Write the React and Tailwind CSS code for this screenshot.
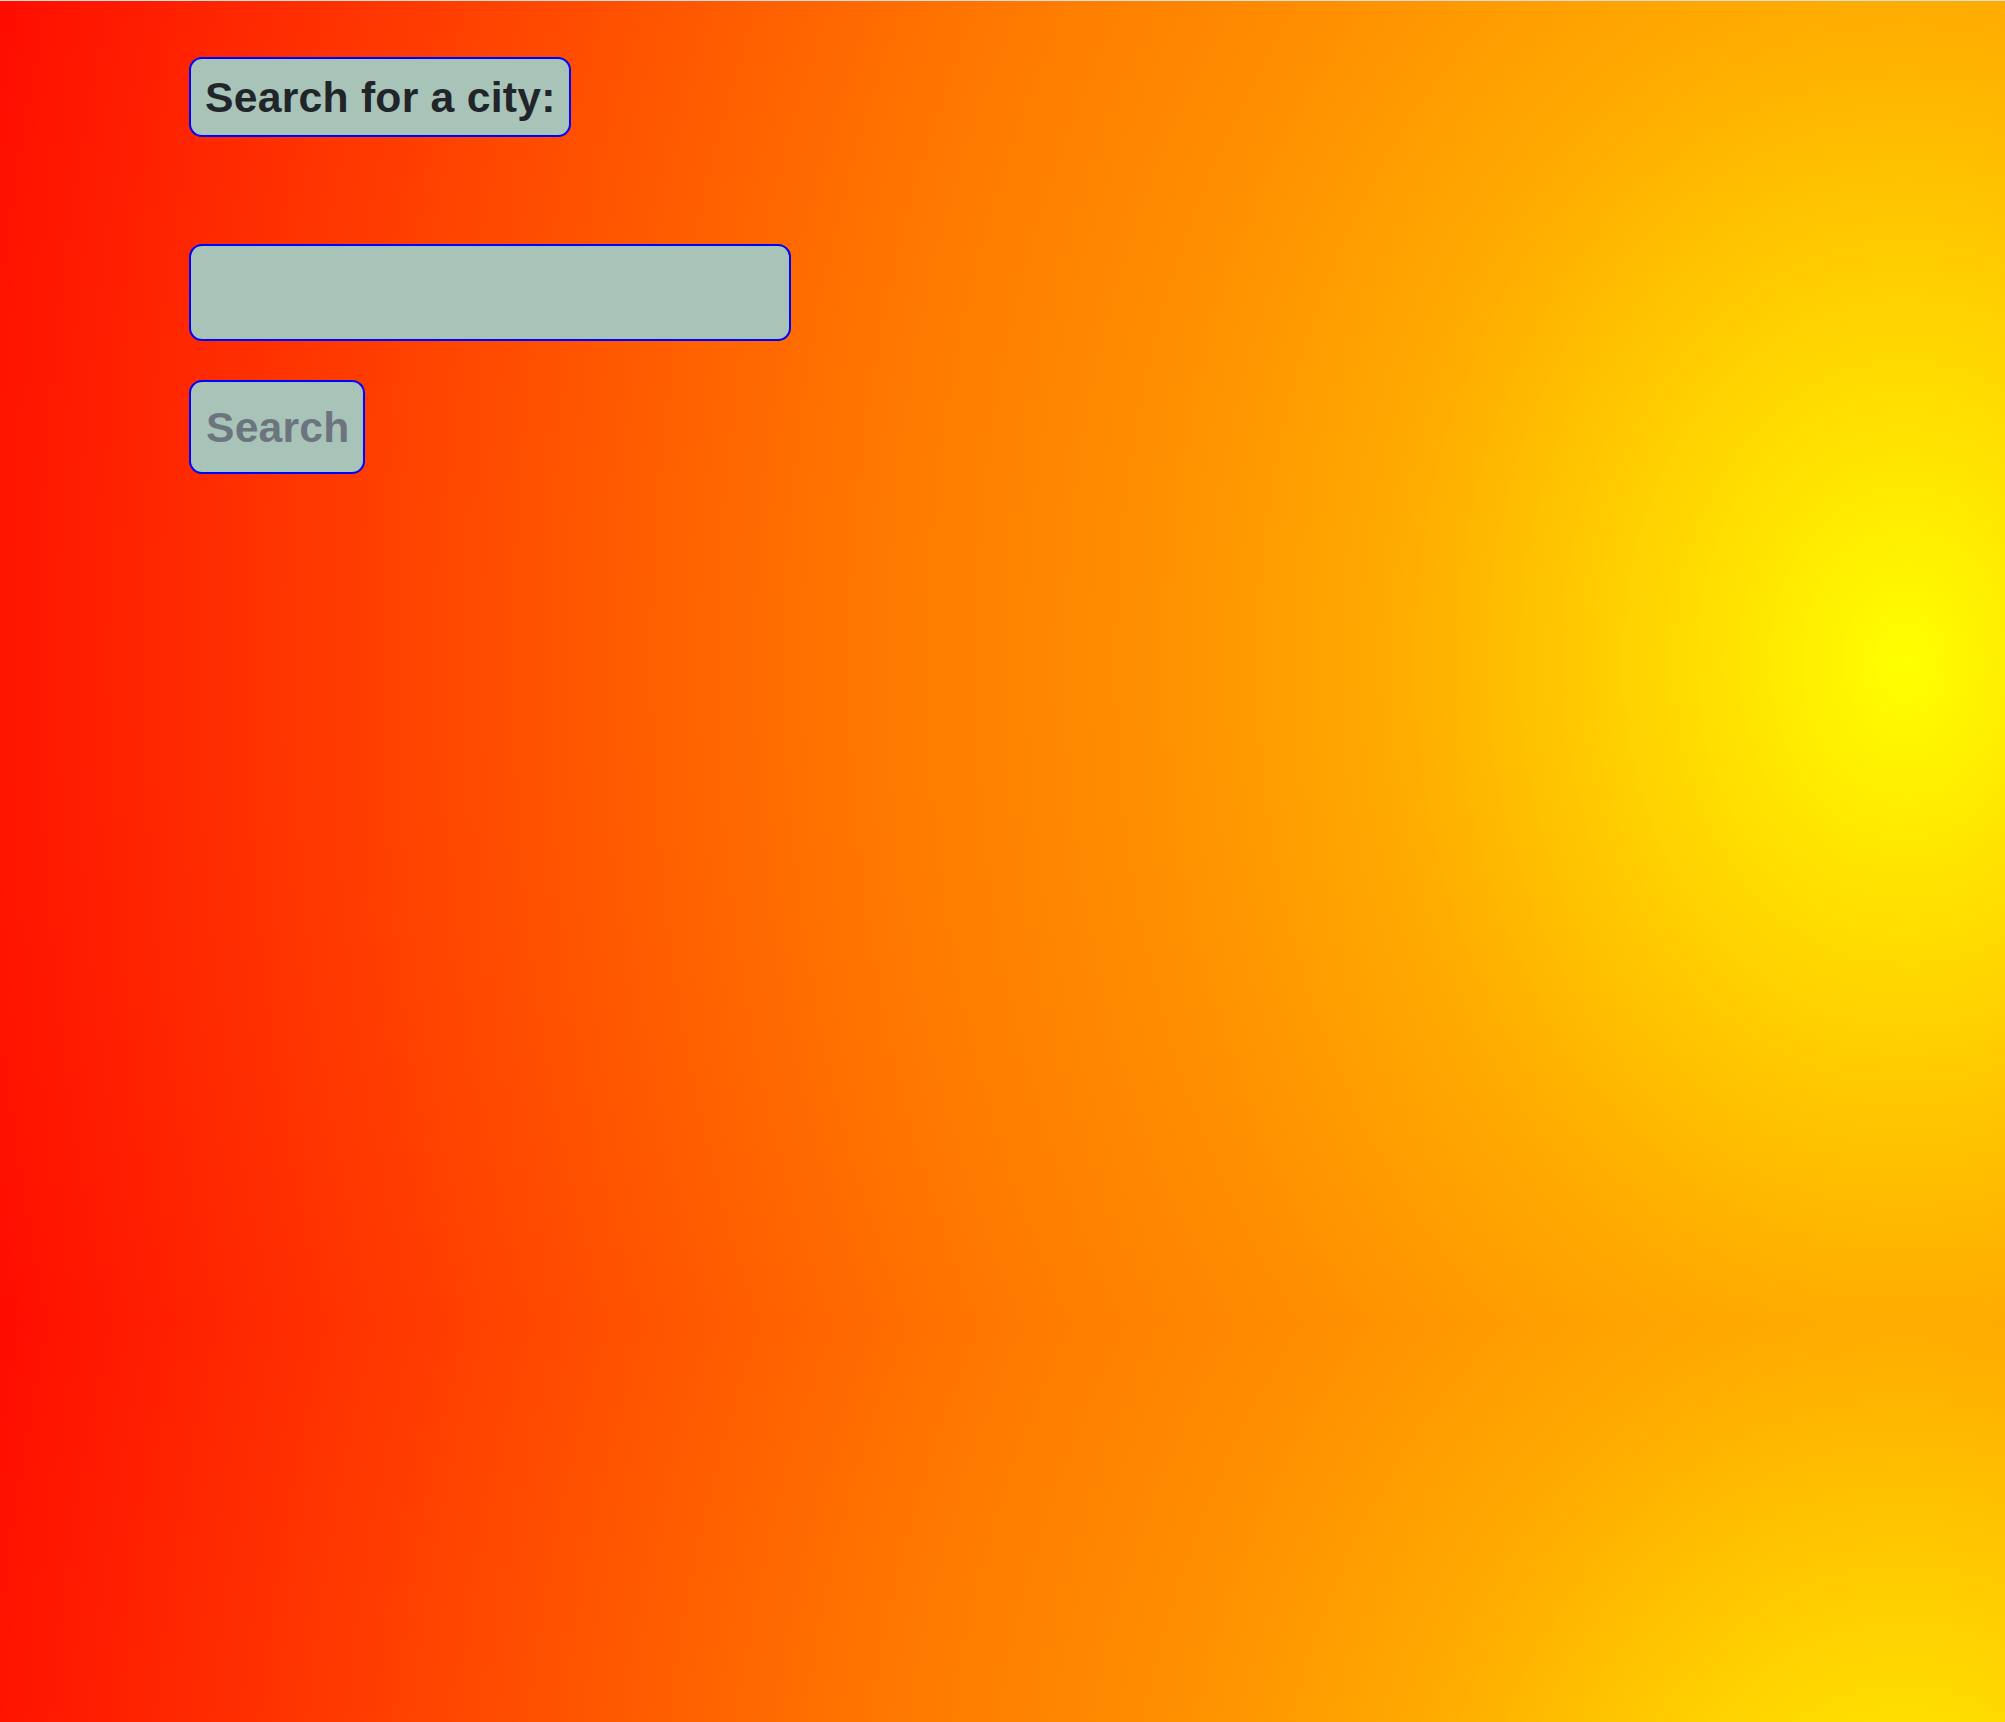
import React from "react";

export default function App() {
  return (
    <div
      className="min-h-[1722px] w-full border-t border-[#dedede] bg-[radial-gradient(2050px_2665px_at_1905px_662px,#ffff00_0px,#ffd500_258px,#ffab00_515px,#ff8f00_765px,#ff7a00_1015px,#ff4f00_1394px,#ff1500_1905px,#ff0000_2060px)] [background-size:100%_1324px] bg-repeat"
      style={{ fontFamily: '"Liberation Sans", Arial, sans-serif' }}
    >
      <div className="flex flex-col items-start pl-[189px] pt-[56px]">
        <label
          htmlFor="city"
          className="flex h-[80px] w-[382px] items-center rounded-[13px] border-2 border-[#0000ff] bg-[#a8c4b9] pl-[14px] text-[42.67px] font-bold leading-[49px] tracking-[0.25px] text-[#212529]"
        >
          Search for a city:
        </label>
        <input
          id="city"
          type="text"
          className="mt-[107px] h-[97px] w-[602px] rounded-[13px] border-2 border-[#0000ff] bg-[#a8c4b9] px-[14px] text-[42.67px] text-[#212529] outline-none"
        />
        <button
          type="button"
          className="mt-[39px] flex h-[94px] w-[176px] items-center rounded-[13px] border-2 border-[#0000ff] bg-[#a8c4b9] pl-[15px] text-[42.67px] font-bold leading-[49px] tracking-[0.2px] text-[#6c757d]"
        >
          Search
        </button>
      </div>
    </div>
  );
}
